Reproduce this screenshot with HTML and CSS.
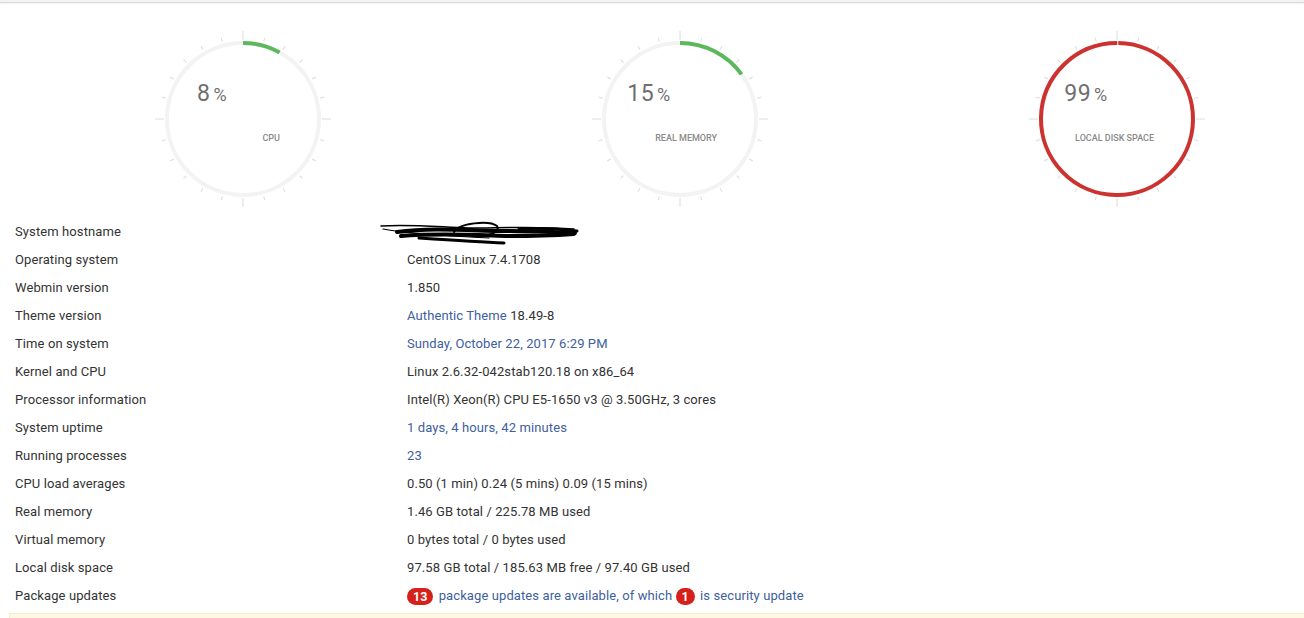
FILE: index.html
```html
<!DOCTYPE html>
<html>
<head>
<meta charset="utf-8">
<link rel="stylesheet" href="styles.css">
</head>
<body>
<div class="topbar"></div>
<svg class="defs" width="0" height="0">
  <defs>
    <g id="ticks" stroke="#dcdcdc" stroke-width="1">
      <line x1="90" y1="2" x2="90" y2="11"/>
      <line x1="90" y1="6" x2="90" y2="10" transform="rotate(15 90 90)"/>
      <line x1="90" y1="6" x2="90" y2="10" transform="rotate(30 90 90)"/>
      <line x1="90" y1="6" x2="90" y2="10" transform="rotate(45 90 90)"/>
      <line x1="90" y1="6" x2="90" y2="10" transform="rotate(60 90 90)"/>
      <line x1="90" y1="6" x2="90" y2="10" transform="rotate(75 90 90)"/>
      <line x1="90" y1="2" x2="90" y2="11" transform="rotate(90 90 90)"/>
      <line x1="90" y1="6" x2="90" y2="10" transform="rotate(105 90 90)"/>
      <line x1="90" y1="6" x2="90" y2="10" transform="rotate(120 90 90)"/>
      <line x1="90" y1="6" x2="90" y2="10" transform="rotate(135 90 90)"/>
      <line x1="90" y1="6" x2="90" y2="10" transform="rotate(150 90 90)"/>
      <line x1="90" y1="6" x2="90" y2="10" transform="rotate(165 90 90)"/>
      <line x1="90" y1="2" x2="90" y2="11" transform="rotate(180 90 90)"/>
      <line x1="90" y1="6" x2="90" y2="10" transform="rotate(195 90 90)"/>
      <line x1="90" y1="6" x2="90" y2="10" transform="rotate(210 90 90)"/>
      <line x1="90" y1="6" x2="90" y2="10" transform="rotate(225 90 90)"/>
      <line x1="90" y1="6" x2="90" y2="10" transform="rotate(240 90 90)"/>
      <line x1="90" y1="6" x2="90" y2="10" transform="rotate(255 90 90)"/>
      <line x1="90" y1="2" x2="90" y2="11" transform="rotate(270 90 90)"/>
      <line x1="90" y1="6" x2="90" y2="10" transform="rotate(285 90 90)"/>
      <line x1="90" y1="6" x2="90" y2="10" transform="rotate(300 90 90)"/>
      <line x1="90" y1="6" x2="90" y2="10" transform="rotate(315 90 90)"/>
      <line x1="90" y1="6" x2="90" y2="10" transform="rotate(330 90 90)"/>
      <line x1="90" y1="6" x2="90" y2="10" transform="rotate(345 90 90)"/>
    </g>
  </defs>
</svg>
<div class="gauges">
  <div class="col">
    <div class="gauge">
      <svg width="180" height="180" viewBox="0 0 180 180">
        <use href="#ticks"/>
        <circle cx="90" cy="90" r="76" fill="none" stroke="#f3f3f3" stroke-width="4"/>
        <circle cx="90" cy="90" r="76" fill="none" stroke="#5cb85c" stroke-width="4" stroke-dasharray="38.2 1000" transform="rotate(-90 90 90)"/>
      </svg>
      <div class="pct">8<span class="sign">%</span></div>
      <div class="lbl">CPU</div>
    </div>
  </div>
  <div class="col">
    <div class="gauge">
      <svg width="180" height="180" viewBox="0 0 180 180">
        <use href="#ticks"/>
        <circle cx="90" cy="90" r="76" fill="none" stroke="#f3f3f3" stroke-width="4"/>
        <circle cx="90" cy="90" r="76" fill="none" stroke="#5cb85c" stroke-width="4" stroke-dasharray="71.6 1000" transform="rotate(-90 90 90)"/>
      </svg>
      <div class="pct">15<span class="sign">%</span></div>
      <div class="lbl">REAL MEMORY</div>
    </div>
  </div>
  <div class="col">
    <div class="gauge">
      <svg width="180" height="180" viewBox="0 0 180 180">
        <use href="#ticks"/>
        <circle cx="90" cy="90" r="76" fill="none" stroke="#f3f3f3" stroke-width="4"/>
        <circle cx="90" cy="90" r="76" fill="none" stroke="#cc3330" stroke-width="4" stroke-dasharray="475.6 1000" transform="rotate(-89 90 90)"/>
      </svg>
      <div class="pct">99<span class="sign">%</span></div>
      <div class="lbl">LOCAL DISK SPACE</div>
    </div>
  </div>
</div>
<div class="info">
  <div class="row"><div class="k">System hostname</div><div class="v">
    <svg class="scribble" width="210" height="30" viewBox="0 0 210 30">
      <g fill="none" stroke="#000" stroke-linecap="round" stroke-linejoin="round">
        <path d="M2 8 C30 6 60 9 90 10 C120 10 160 8 195 11" stroke-width="1.5"/>
        <path d="M4 11 C30 16 70 18 110 20" stroke-width="1.2"/>
        <path d="M18 14 C50 10 80 12 120 13 C150 13 175 14 196 15" stroke-width="4"/>
        <path d="M22 18 C60 15 95 17 130 18 C160 18 180 17 195 16" stroke-width="4"/>
        <path d="M40 20 C70 22 100 24 125 25" stroke-width="3"/>
        <path d="M75 14 C80 5 110 2 118 8 C122 14 108 20 92 18" stroke-width="2"/>
        <path d="M140 11 C160 10 180 11 198 13" stroke-width="3"/>
      </g>
    </svg>
  </div></div>
  <div class="row"><div class="k">Operating system</div><div class="v">CentOS Linux 7.4.1708</div></div>
  <div class="row"><div class="k">Webmin version</div><div class="v">1.850</div></div>
  <div class="row"><div class="k">Theme version</div><div class="v"><span class="link">Authentic Theme</span> 18.49-8</div></div>
  <div class="row"><div class="k">Time on system</div><div class="v"><span class="link">Sunday, October 22, 2017 6:29 PM</span></div></div>
  <div class="row"><div class="k">Kernel and CPU</div><div class="v">Linux 2.6.32-042stab120.18 on x86_64</div></div>
  <div class="row"><div class="k">Processor information</div><div class="v">Intel(R) Xeon(R) CPU E5-1650 v3 @ 3.50GHz, 3 cores</div></div>
  <div class="row"><div class="k">System uptime</div><div class="v"><span class="link">1 days, 4 hours, 42 minutes</span></div></div>
  <div class="row"><div class="k">Running processes</div><div class="v"><span class="link">23</span></div></div>
  <div class="row"><div class="k">CPU load averages</div><div class="v">0.50 (1 min) 0.24 (5 mins) 0.09 (15 mins)</div></div>
  <div class="row"><div class="k">Real memory</div><div class="v">1.46 GB total / 225.78 MB used</div></div>
  <div class="row"><div class="k">Virtual memory</div><div class="v">0 bytes total / 0 bytes used</div></div>
  <div class="row"><div class="k">Local disk space</div><div class="v">97.58 GB total / 185.63 MB free / 97.40 GB used</div></div>
  <div class="row"><div class="k">Package updates</div><div class="v link"><span class="badge">13</span> package updates are available, of which <span class="badge">1</span> is security update</div></div>
</div>
<div class="alert"></div>
</body>
</html>
```

FILE: styles.css
```css
html, body {
  margin: 0;
  padding: 0;
  overflow: hidden;
  background: #fff;
  font-family: Roboto, "Liberation Sans", sans-serif;
}
.topbar {
  height: 2px;
  background: #f4f4f4;
  border-bottom: 1px solid #d9d9d9;
  box-shadow: 0 1px 2px rgba(0,0,0,0.05);
}
.defs {
  position: absolute;
  width: 0;
  height: 0;
}
.gauges {
  display: grid;
  grid-template-columns: 437px 437px 1fr;
  padding-top: 26px;
}
.col {
  padding-left: 153px;
}
.gauge {
  position: relative;
  width: 180px;
  height: 180px;
}
.gauge svg {
  display: block;
}
.pct {
  position: absolute;
  left: -1px;
  top: 53px;
  width: 120px;
  text-align: center;
  font-size: 23px;
  line-height: 24px;
  color: #6f6f6f;
  letter-spacing: 0.5px;
}
.sign {
  font-size: 18px;
  margin-left: 3px;
}
.lbl {
  position: absolute;
  right: 53px;
  top: 103px;
  font-size: 9px;
  line-height: 12px;
  font-weight: 500;
  color: #8a8a8a;
  white-space: nowrap;
}
.info {
  margin-top: 9px;
  font-size: 13px;
  color: #333;
  letter-spacing: 0.1px;
}
.row {
  display: flex;
  height: 28px;
  line-height: 28px;
}
.k {
  width: 392px;
  padding-left: 15px;
  flex: none;
}
.v {
  position: relative;
  white-space: nowrap;
}
.link {
  color: #40609e;
}
.scribble {
  position: absolute;
  left: -28px;
  top: 0px;
}
.badge {
  display: inline-block;
  background: #d5201b;
  color: #fff;
  font-weight: 700;
  font-size: 12.5px;
  line-height: 17px;
  height: 17px;
  padding: 0 6px;
  border-radius: 9px;
  vertical-align: -1px;
  margin-right: 2px;
  letter-spacing: 0;
}
.alert {
  margin: 3px 0 0 9px;
  height: 20px;
  background: #fcf8e3;
  border-top: 1px solid #faebcc;
  border-left: 1px solid #faebcc;
}
```
